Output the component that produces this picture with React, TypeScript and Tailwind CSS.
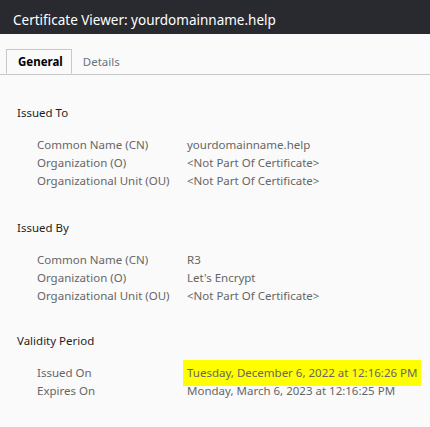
import React from "react";

type Row = { label: string; value: string; highlight?: boolean };

const sections: { title: string; gap: string; rows: Row[] }[] = [
  {
    title: "Issued To",
    gap: "mb-[29px]",
    rows: [
      { label: "Common Name (CN)", value: "yourdomainname.help" },
      { label: "Organization (O)", value: "<Not Part Of Certificate>" },
      { label: "Organizational Unit (OU)", value: "<Not Part Of Certificate>" },
    ],
  },
  {
    title: "Issued By",
    gap: "mb-[27px]",
    rows: [
      { label: "Common Name (CN)", value: "R3" },
      { label: "Organization (O)", value: "Let's Encrypt" },
      { label: "Organizational Unit (OU)", value: "<Not Part Of Certificate>" },
    ],
  },
  {
    title: "Validity Period",
    gap: "",
    rows: [
      { label: "Issued On", value: "Tuesday, December 6, 2022 at 12:16:26 PM", highlight: true },
      { label: "Expires On", value: "Monday, March 6, 2023 at 12:16:25 PM" },
    ],
  },
];

export default function App() {
  return (
    <div className="w-[430px] h-[427px] overflow-hidden bg-[#fafafa] font-['Noto_Sans',sans-serif]">
      {/* Title bar */}
      <div className="h-[34px] bg-[#292a2f] flex items-end pl-[13px] pb-[4px]">
        <span className="text-[13.5px] text-white leading-5 whitespace-nowrap">Certificate Viewer: yourdomainname.help</span>
      </div>

      {/* Tabs */}
      <div className="mt-[15px] flex border-b border-[#c8c8c8] pl-[6px]">
        <div className="h-[25px] -mb-px border border-[#c8c8c8] border-b-[#fafafa] bg-[#fafafa] pl-[11px] pr-[8px] flex items-center text-[11.5px] font-bold text-black">
          General
        </div>
        <div className="h-[25px] px-[11px] flex items-center text-[11.5px] text-[#6b7280]">Details</div>
      </div>

      {/* Sections */}
      <div className="pl-[17px] pt-[29px] text-[11.5px]">
        {sections.map((s) => (
          <div key={s.title} className={s.gap}>
            <div className="text-[#1e1e1e] leading-[18px] mb-[14px]">{s.title}</div>
            <div className="pl-[20px]">
              {s.rows.map((r) => (
                <div key={r.label} className="flex leading-[18px] text-[#666] whitespace-nowrap">
                  <div className="w-[150px] shrink-0">{r.label}</div>
                  <div className={r.highlight ? "-ml-[4px] pl-[4px] pr-[4px] bg-[#ffff00] h-[26px] -my-[4px] flex items-center" : ""}>{r.value}</div>
                </div>
              ))}
            </div>
          </div>
        ))}
      </div>
    </div>
  );
}
